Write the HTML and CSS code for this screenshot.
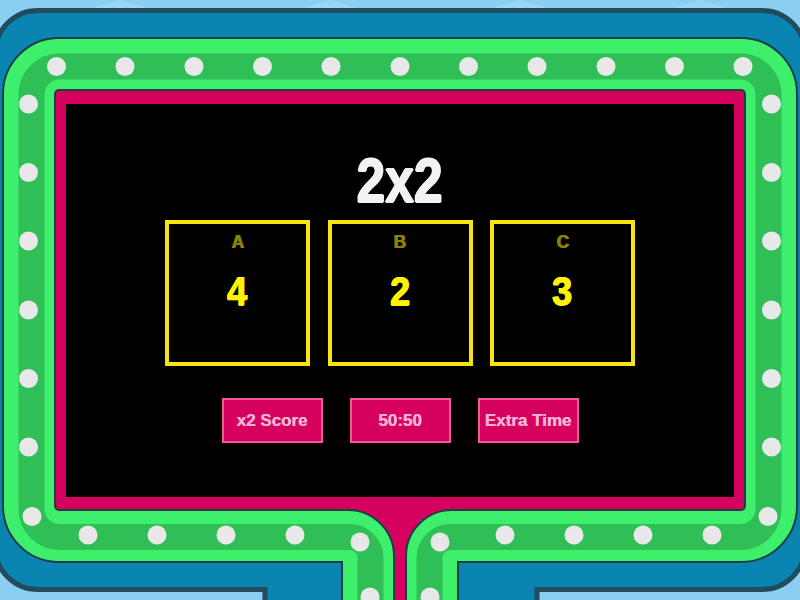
FILE: index.html
```html
<!DOCTYPE html>
<html>
<head>
<meta charset="utf-8">
<title>Gameshow Quiz</title>
<link rel="stylesheet" href="styles.css">
</head>
<body>
<div class="stage">
  <svg class="frame" width="800" height="600" viewBox="0 0 800 600" aria-hidden="true">
    <rect width="800" height="600" fill="#8acff2"/>
    <path class="sky-shape" d="M120 0 L150 9 L90 9 Z M330 0 L360 9 L300 9 Z M520 0 L550 9 L490 9 Z M700 0 L730 9 L670 9 Z"/>
    <path class="blue" d="M265 620 V589.5 H38 A43 43 0 0 1 -5 546.5 V53.5 A43 43 0 0 1 38 10.5 H762 A43 43 0 0 1 805 53.5 V546.5 A43 43 0 0 1 762 589.5 H537 V620 Z"/>
    <path class="underlay" d="M40 80 H760 V520 H40 Z M380 500 H420 V610 H380 Z"/>
    <path class="g-out" d="M368 620 V556 A20 20 0 0 0 348 536 H59 A30 30 0 0 1 29 506 V94 A30 30 0 0 1 59 64 H741 A30 30 0 0 1 771 94 V506 A30 30 0 0 1 741 536 H452 A20 20 0 0 0 432 556 V620"/>
    <path class="g-bright" d="M368 620 V556 A20 20 0 0 0 348 536 H59 A30 30 0 0 1 29 506 V94 A30 30 0 0 1 59 64 H741 A30 30 0 0 1 771 94 V506 A30 30 0 0 1 741 536 H452 A20 20 0 0 0 432 556 V620"/>
    <path class="g-dark" d="M370.5 620 V558 A21 21 0 0 0 349.5 537 H59.5 A28 28 0 0 1 31.5 509 V94.5 A28 28 0 0 1 59.5 66.5 H740.5 A28 28 0 0 1 768.5 94.5 V509 A28 28 0 0 1 740.5 537 H450.5 A21 21 0 0 0 429.5 558 V620"/>
    <g class="dots">
      <circle cx="56.5" cy="66.5" r="9.5"/><circle cx="125" cy="66.5" r="9.5"/><circle cx="194" cy="66.5" r="9.5"/>
      <circle cx="262.5" cy="66.5" r="9.5"/><circle cx="331" cy="66.5" r="9.5"/><circle cx="400" cy="66.5" r="9.5"/>
      <circle cx="468.5" cy="66.5" r="9.5"/><circle cx="537" cy="66.5" r="9.5"/><circle cx="606" cy="66.5" r="9.5"/>
      <circle cx="674.5" cy="66.5" r="9.5"/><circle cx="743" cy="66.5" r="9.5"/>
      <circle cx="28.5" cy="104" r="9.5"/><circle cx="28.5" cy="172.5" r="9.5"/><circle cx="28.5" cy="241" r="9.5"/>
      <circle cx="28.5" cy="310" r="9.5"/><circle cx="28.5" cy="378.5" r="9.5"/><circle cx="28.5" cy="447" r="9.5"/>
      <circle cx="32" cy="516.5" r="9.5"/>
      <circle cx="771.5" cy="104" r="9.5"/><circle cx="771.5" cy="172.5" r="9.5"/><circle cx="771.5" cy="241" r="9.5"/>
      <circle cx="771.5" cy="310" r="9.5"/><circle cx="771.5" cy="378.5" r="9.5"/><circle cx="771.5" cy="447" r="9.5"/>
      <circle cx="768" cy="516.5" r="9.5"/>
      <circle cx="88" cy="535" r="9.5"/><circle cx="157" cy="535" r="9.5"/><circle cx="226" cy="535" r="9.5"/>
      <circle cx="295" cy="535" r="9.5"/><circle cx="360" cy="542" r="9.5"/><circle cx="370" cy="597" r="9.5"/>
      <circle cx="440" cy="542" r="9.5"/><circle cx="430" cy="597" r="9.5"/>
      <circle cx="505" cy="535" r="9.5"/><circle cx="574" cy="535" r="9.5"/><circle cx="643" cy="535" r="9.5"/>
      <circle cx="712" cy="535" r="9.5"/>
    </g>
  </svg>

  <main class="panel">
    <h1 class="title">2x2</h1>
    <div class="cards">
      <div class="card"><span class="letter">A</span><span class="value">4</span></div>
      <div class="card"><span class="letter">B</span><span class="value">2</span></div>
      <div class="card"><span class="letter">C</span><span class="value">3</span></div>
    </div>
    <div class="buttons">
      <button class="btn">x2 Score</button>
      <button class="btn">50:50</button>
      <button class="btn">Extra Time</button>
    </div>
  </main>
</div>
</body>
</html>
```

FILE: styles.css
```css
html, body {
  margin: 0;
  padding: 0;
  background: #8acff2;
  overflow: hidden;
}

.stage {
  position: relative;
  width: 800px;
  height: 600px;
  box-sizing: border-box;
  padding: 104px 0 0 66px;
  overflow: hidden;
  font-family: "Liberation Sans", Arial, sans-serif;
}

.frame {
  position: absolute;
  left: 0;
  top: 0;
  z-index: 0;
}

.sky-shape { fill: #9ad7f5; }

.blue {
  fill: #0a84b0;
  stroke: #234b5e;
  stroke-width: 5;
}

.underlay { fill: #d6005e; }

.g-out {
  fill: none;
  stroke: #1c3f47;
  stroke-width: 54;
}

.g-bright {
  fill: none;
  stroke: #3def6b;
  stroke-width: 50;
}

.g-dark {
  fill: none;
  stroke: #30be57;
  stroke-width: 26;
}

.dots circle { fill: #e8e8e8; }

.panel {
  position: relative;
  z-index: 1;
  box-sizing: border-box;
  width: 668px;
  height: 393px;
  background: #000;
  display: flex;
  flex-direction: column;
  align-items: center;
  padding-top: 45px;
}

.title {
  margin: 0;
  height: 63px;
  font-size: 63px;
  line-height: 63px;
  font-weight: 700;
  color: #f2f2f2;
  text-shadow: 1px 0 0 #f2f2f2, -1px 0 0 #f2f2f2, 0 1px 0 #f2f2f2, 0 -1px 0 #f2f2f2;
  transform: scaleX(0.82);
}

.cards {
  display: flex;
  gap: 17.5px;
  margin-top: 8px;
}

.card {
  box-sizing: border-box;
  width: 145px;
  height: 146px;
  border: 4px solid #f6e60c;
  display: flex;
  flex-direction: column;
  align-items: center;
  padding-top: 8px;
}

.letter {
  font-size: 19px;
  line-height: 19px;
  font-weight: 700;
  color: #8a8100;
  text-shadow: 0.5px 0 0 #8a8100, -0.5px 0 0 #8a8100;
  transform: scaleX(0.9);
}

.value {
  margin-top: 20px;
  font-size: 40px;
  line-height: 40px;
  font-weight: 700;
  color: #fff200;
  text-shadow: 0.7px 0 0 #fff200, -0.7px 0 0 #fff200, 0 0.6px 0 #fff200;
  transform: scaleX(0.9);
}

.buttons {
  display: flex;
  gap: 27px;
  margin-top: 32px;
}

.btn {
  box-sizing: border-box;
  width: 101px;
  height: 45px;
  margin: 0;
  padding: 0;
  background: #d6005f;
  border: 2px solid #ef5a9b;
  border-radius: 0;
  color: #f7b3d3;
  font-family: "Liberation Sans", Arial, sans-serif;
  font-weight: 700;
  font-size: 17px;
  line-height: 1;
  text-shadow: 0.4px 0 0 #f7b3d3;
  display: flex;
  align-items: center;
  justify-content: center;
  white-space: nowrap;
}
```
